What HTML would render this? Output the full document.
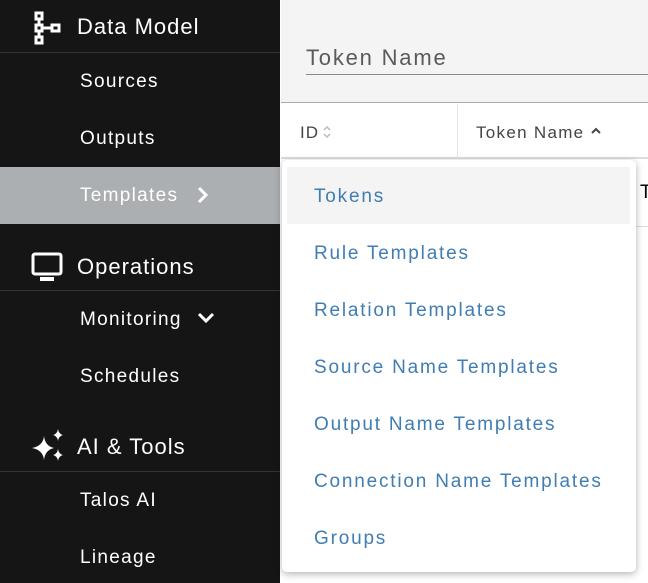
<!DOCTYPE html>
<html><head><style>
*{margin:0;padding:0;box-sizing:border-box}
body{width:648px;height:583px;overflow:hidden;background:#fff;font-family:"Liberation Sans",sans-serif;position:relative}
#side{position:absolute;left:0;top:0;width:280px;height:583px;background:#151515;color:#fff}
.h{position:absolute;left:77px;font-size:22px;letter-spacing:1px}
.s{position:absolute;left:80px;font-size:19px;letter-spacing:1.3px}
.line{position:absolute;left:0;width:280px;height:1px;background:#333}
#top{position:absolute;left:281px;top:0;width:367px;height:103px;background:#f4f4f4;border-bottom:1px solid #aaa}
#th{position:absolute;left:281px;top:104px;width:367px;height:55px;background:#fff;border-bottom:2px solid #ddd;color:#444;font-size:17px}
#menu{position:absolute;left:282px;top:160px;width:354px;height:412px;background:#fff;border-radius:5px;box-shadow:0 2px 8px rgba(0,0,0,.3)}
.mi{position:absolute;left:32px;font-size:19px;color:#3f7db3;letter-spacing:1.8px}
</style></head><body>
<div id="side">
<svg style="position:absolute;left:34px;top:11px" width="28" height="34" viewBox="0 0 28 34" fill="none" stroke="#fff" stroke-width="3"><rect x="2" y="2" width="6" height="6"/><rect x="2" y="14" width="6" height="6"/><rect x="2" y="26" width="6" height="6"/><rect x="18" y="14" width="7" height="6"/><path d="M5 8v6M5 20v6M8 17h10"/></svg>
<div class="h" style="top:14px">Data Model</div>
<div class="line" style="top:52px"></div>
<div class="s" style="top:71px">Sources</div>
<div class="s" style="top:128px">Outputs</div>
<div style="position:absolute;left:0;top:167px;width:280px;height:57px;background:#acafb2"></div>
<div class="s" style="top:185px">Templates</div>
<svg style="position:absolute;left:196px;top:186px" width="14" height="18" viewBox="0 0 14 18" fill="none" stroke="#fff" stroke-width="3"><path d="M3 2l7 7-7 7"/></svg>
<svg style="position:absolute;left:31px;top:252px" width="33" height="29" viewBox="0 0 33 29" fill="none" stroke="#fff" stroke-width="3"><rect x="2" y="2" width="28" height="20" rx="2"/><path d="M9 27h14" stroke-width="4"/></svg>
<div class="h" style="top:254px">Operations</div>
<div class="line" style="top:290px"></div>
<div class="s" style="top:309px">Monitoring</div>
<svg style="position:absolute;left:197px;top:312px" width="18" height="12" viewBox="0 0 18 12" fill="none" stroke="#fff" stroke-width="3"><path d="M2 2l7 7 7-7"/></svg>
<div class="s" style="top:366px">Schedules</div>
<svg style="position:absolute;left:30px;top:428px" width="35" height="36" viewBox="0 0 35 36" fill="#fff"><path d="M14 8Q15 18 24 20Q15 22 14 32Q13 22 2 20Q13 18 14 8Z"/><path d="M28 1Q28.7 6 33 7Q28.7 8 28 13Q27.3 8 23 7Q27.3 6 28 1Z"/><path d="M28 21Q28.7 26 33 27Q28.7 28 28 33Q27.3 28 23 27Q27.3 26 28 21Z"/></svg>
<div class="h" style="top:434px">AI &amp; Tools</div>
<div class="line" style="top:471px"></div>
<div class="s" style="top:490px">Talos AI</div>
<div class="s" style="top:547px">Lineage</div>
</div>
<div id="top">
<div style="position:absolute;left:25px;top:45px;font-size:22px;color:#5a5a5a;letter-spacing:1.8px">Token Name</div>
<div style="position:absolute;left:25px;top:74px;width:342px;height:1px;background:#888"></div>
</div>
<div id="th">
<div style="position:absolute;left:19px;top:19px;letter-spacing:1px">ID</div>
<svg style="position:absolute;left:41px;top:20px" width="10" height="16" viewBox="0 0 10 16" fill="none" stroke="#bbb" stroke-width="1.5"><path d="M2 6l3-3 3 3M2 10l3 3 3-3"/></svg>
<div style="position:absolute;left:176px;top:0;width:1px;height:55px;background:#e6e6e6"></div>
<div style="position:absolute;left:195px;top:19px;letter-spacing:1.3px">Token Name</div>
<svg style="position:absolute;left:309px;top:22px" width="12" height="10" viewBox="0 0 12 10" fill="none" stroke="#444" stroke-width="2"><path d="M2 7l4-4 4 4"/></svg>
</div>
<div style="position:absolute;left:640px;top:182px;font-size:19px">T</div>
<div style="position:absolute;left:636px;top:226px;width:12px;height:1px;background:#ddd"></div>
<div id="menu">
<div style="position:absolute;left:5px;top:7px;width:343px;height:57px;background:#f4f4f4"></div>
<div class="mi" style="top:26px">Tokens</div>
<div class="mi" style="top:83px">Rule Templates</div>
<div class="mi" style="top:140px">Relation Templates</div>
<div class="mi" style="top:197px">Source Name Templates</div>
<div class="mi" style="top:254px">Output Name Templates</div>
<div class="mi" style="top:311px">Connection Name Templates</div>
<div class="mi" style="top:368px">Groups</div>
</div>
</body></html>
